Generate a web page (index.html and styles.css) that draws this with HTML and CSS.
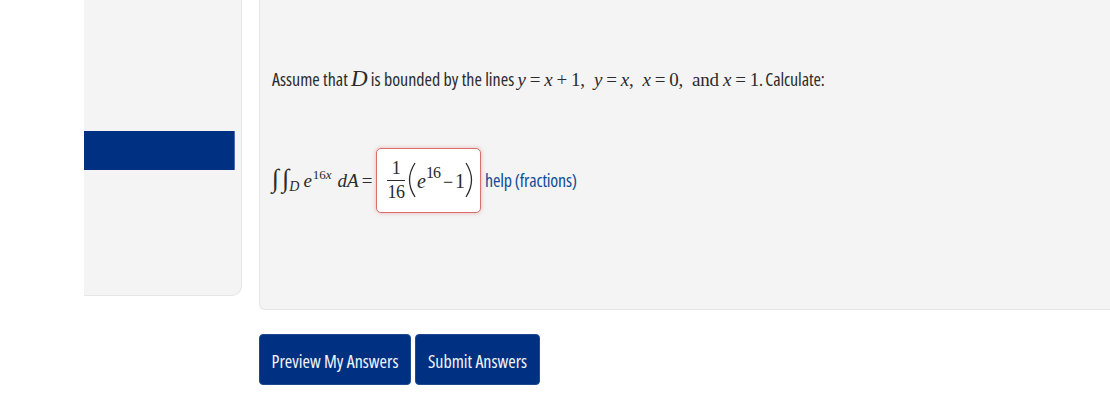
FILE: index.html
```html
<!DOCTYPE html>
<html lang="en">
<head>
<meta charset="utf-8">
<title>Problem</title>
<link rel="stylesheet" href="styles.css">
</head>
<body>
<div class="page">
  <aside class="side">
    <div class="side-bar"></div>
  </aside>
  <main class="content">
    <section class="well">
      <p class="line-a">Assume that <span class="m big">D</span> is bounded by the lines <span class="m"><i>y</i><span class="op">=</span><i>x</i><span class="op">+</span>1,<span class="sep"></span><i>y</i><span class="op">=</span><i>x</i>,<span class="sep"></span><i>x</i><span class="op">=</span>0,<span class="sep"></span>and<span class="op-gap"></span><i>x</i><span class="op">=</span>1</span>. <span class="calc">Calculate:</span></p>
      <div class="line-b">
        <span class="m integral"><span class="int">∫</span><span class="int second">∫</span><sub class="sub-d">D</sub><i class="e">e</i><sup class="sup-a">16<i>x</i></sup><i class="da">dA</i><span class="eq">=</span></span>
        <span class="answer">
          <span class="frac"><span class="num">1</span><span class="den">16</span></span>
          <svg class="paren paren-open" viewBox="0 0 8 36" aria-hidden="true"><path d="M7 1C2.500 8 1.500 13 1.500 18S2.500 28 7 35"/></svg>
          <span class="m expr"><i>e</i><sup class="sup-b">16</sup><span class="minus">−</span>1</span>
          <svg class="paren" viewBox="0 0 8 36" aria-hidden="true"><path d="M1 1C5.500 8 6.500 13 6.500 18S5.500 28 1 35"/></svg>
        </span>
        <a class="help" href="#">help (fractions)</a>
      </div>
    </section>
    <div class="actions">
      <button class="btn btn-preview" type="button">Preview My Answers</button>
      <button class="btn btn-submit" type="button">Submit Answers</button>
    </div>
  </main>
</div>
</body>
</html>
```

FILE: styles.css
```css
html, body {
  margin: 0;
  padding: 0;
  height: 400px;
  overflow: hidden;
  background: #fff;
}

body {
  font-family: "Open Sans", "Noto Sans", sans-serif;
  font-stretch: 80%;
  color: #2b2b2b;
  font-size: 18px;
}

.page {
  display: flex;
  align-items: flex-start;
  padding-left: 84px;
  gap: 17px;
}

.side {
  box-sizing: border-box;
  width: 158px;
  height: 296px;
  padding-top: 131px;
  background: #f4f4f4;
  border-right: 1px solid #e6e6e6;
  border-bottom: 1px solid #e6e6e6;
  border-bottom-right-radius: 10px;
}

.side-bar {
  width: 151px;
  height: 39px;
  box-sizing: border-box;
  background: #003082;
  border-right: 1px solid #4a6fb0;
}

.content {
  flex: 1;
  min-width: 0;
  margin-right: -12px;
}

.well {
  box-sizing: border-box;
  height: 310px;
  padding: 67px 0 0 12px;
  background: #f4f4f4;
  border-left: 1px solid #e6e6e6;
  border-bottom: 1px solid #e6e6e6;
  border-bottom-left-radius: 6px;
}

.line-a {
  margin: 0;
  height: 24px;
  line-height: 24px;
  white-space: nowrap;
}

.m {
  font-family: "Liberation Serif", serif;
  font-size: 19px;
  letter-spacing: -0.2px;
}

.big {
  font-style: italic;
  font-size: 23px;
}

.op {
  margin: 0 4px;
}

.sep {
  display: inline-block;
  width: 9px;
}

.op-gap {
  display: inline-block;
  width: 4px;
}

.calc {
  margin-left: -1px;
  letter-spacing: -0.1px;
}

.line-b {
  display: flex;
  align-items: center;
  height: 64px;
  margin-top: 57px;
}

.integral {
  box-sizing: border-box;
  display: block;
  width: 104px;
  white-space: nowrap;
  letter-spacing: 0;
  line-height: 24px;
}

.int {
  font-size: 26px;
  font-style: italic;
  margin-right: 3px;
}

.second {
  margin-right: 0;
}

.sub-d {
  font-size: 14px;
  font-style: italic;
  vertical-align: -4px;
  line-height: 0;
  margin-right: 4px;
}

.sup-a {
  font-size: 13px;
  vertical-align: 8px;
  line-height: 0;
  margin: 0 6px 0 1px;
}

.da {
  margin-right: 3px;
}

.answer {
  box-sizing: border-box;
  display: inline-flex;
  align-items: center;
  width: 105px;
  height: 65px;
  padding-left: 10px;
  background: #fff;
  border: 1px solid #d9706c;
  border-radius: 5px;
  box-shadow: 0 0 4px rgba(217, 83, 79, 0.4);
  font-family: "Liberation Serif", serif;
}

.frac {
  display: inline-flex;
  flex-direction: column;
  align-items: center;
  width: 18px;
  font-size: 18px;
  line-height: 23px;
  letter-spacing: -0.5px;
}

.num {
  width: 100%;
  text-align: center;
  border-bottom: 1px solid #2b2b2b;
}

.den {
  width: 100%;
  text-align: center;
}

.paren {
  width: 8px;
  height: 36px;
  flex: none;
  fill: none;
  stroke: #2b2b2b;
  stroke-width: 1.3;
}

.paren-open {
  margin-left: 3px;
  margin-right: 1px;
}

.expr {
  display: inline-block;
  width: 48px;
  white-space: nowrap;
  font-size: 20px;
  letter-spacing: 0;
  line-height: 24px;
  padding-top: 3px;
}

.sup-b {
  font-size: 16px;
  line-height: 0;
  vertical-align: 10px;
  letter-spacing: -1px;
}

.minus {
  font-size: 18px;
  margin: 0 2px 0 3px;
}

.help {
  margin-left: 4px;
  color: #0f4c96;
  text-decoration: none;
  letter-spacing: -0.2px;
}

.actions {
  display: flex;
  gap: 4px;
  margin: 24px 0 0;
}

.btn {
  height: 51px;
  padding: 2px 0 0;
  border: 1px solid #1f4a93;
  border-radius: 4px;
  background: #003082;
  color: #f2f5fb;
  font-family: "Open Sans", "Noto Sans", sans-serif;
  font-stretch: 80%;
  font-size: 18px;
}

.btn-preview {
  width: 152px;
}

.btn-submit {
  width: 125px;
}
```
